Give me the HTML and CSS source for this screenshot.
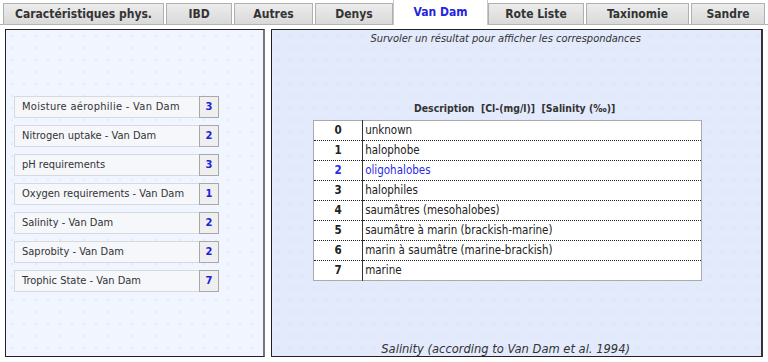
FILE: index.html
```html
<!DOCTYPE html>
<html>
<head>
<meta charset="utf-8">
<link rel="stylesheet" href="styles.css">
</head>
<body>
<div class="tabs">
  <div class="tab t1">Caractéristiques phys.</div>
  <div class="tab t2">IBD</div>
  <div class="tab t3">Autres</div>
  <div class="tab t4">Denys</div>
  <div class="tab t5 active">Van Dam</div>
  <div class="tab t6">Rote Liste</div>
  <div class="tab t7">Taxinomie</div>
  <div class="tab t8">Sandre</div>
</div>
<div class="content">
  <div class="panel left">
    <ul class="list">
      <li class="item"><span class="label wide">Moisture aérophilie - Van Dam</span><span class="count">3</span></li>
      <li class="item"><span class="label">Nitrogen uptake - Van Dam</span><span class="count">2</span></li>
      <li class="item"><span class="label">pH requirements</span><span class="count">3</span></li>
      <li class="item"><span class="label">Oxygen requirements - Van Dam</span><span class="count">1</span></li>
      <li class="item"><span class="label">Salinity - Van Dam</span><span class="count">2</span></li>
      <li class="item"><span class="label">Saprobity - Van Dam</span><span class="count">2</span></li>
      <li class="item"><span class="label">Trophic State - Van Dam</span><span class="count">7</span></li>
    </ul>
  </div>
  <div class="panel right">
    <div class="hint">Survoler un résultat pour afficher les correspondances</div>
    <div class="middle">
      <div class="desc">Description&nbsp; [Cl-(mg/l)]&nbsp; [Salinity (‰)]</div>
      <table class="grid">
        <tr><td class="num">0</td><td>unknown</td></tr>
        <tr><td class="num">1</td><td>halophobe</td></tr>
        <tr class="hl"><td class="num">2</td><td>oligohalobes</td></tr>
        <tr><td class="num">3</td><td>halophiles</td></tr>
        <tr><td class="num">4</td><td>saumâtres (mesohalobes)</td></tr>
        <tr><td class="num">5</td><td>saumâtre à marin (brackish-marine)</td></tr>
        <tr><td class="num">6</td><td>marin à saumâtre (marine-brackish)</td></tr>
        <tr><td class="num">7</td><td>marine</td></tr>
      </table>
    </div>
    <div class="caption">Salinity (according to Van Dam et al. 1994)</div>
  </div>
</div>
</body>
</html>
```
FILE: styles.css
```css
html, body {
  margin: 0;
  padding: 0;
  background: #ffffff;
  font-family: "DejaVu Sans Condensed", "DejaVu Sans", sans-serif;
  color: #333;
}
.tabs {
  display: flex;
  align-items: flex-end;
  height: 24px;
  padding-left: 3px;
  gap: 2px;
  border-bottom: 1px solid #b4b4b4;
  box-sizing: content-box;
}
.tab {
  height: 21px;
  box-sizing: border-box;
  border: 1px solid #b0b0b0;
  border-bottom: none;
  background: linear-gradient(#ececec, #d9d9d9);
  font-weight: bold;
  font-size: 12px;
  color: #333;
  text-align: center;
  line-height: 21px;
}
.t1 { width: 161px; }
.t2 { width: 66px; }
.t3 { width: 79px; }
.t4 { width: 78px; margin-right: -2px; }
.t5 { width: 95px; }
.t6 { width: 96px; margin-left: -2px; }
.t7 { width: 103px; }
.t8 { width: 74px; }
.tab.active {
  height: 25px;
  margin-bottom: -1px;
  background: #ffffff;
  color: #2424e0;
  line-height: 24px;
  position: relative;
  z-index: 1;
  border-color: #c8c8c8;
  border-top: none;
}
.content {
  display: flex;
  gap: 6px;
  padding: 4px 5px 0 5px;
  height: 328px;
}
.panel {
  box-sizing: border-box;
  border: 1px solid #222;
  border-right: 2px solid #777;
  background-image: radial-gradient(circle, rgba(180,195,225,0.35) 0.6px, transparent 0.9px);
  background-size: 12px 12px;
}
.left {
  width: 261px;
  background-color: #f0f5ff;
  display: flex;
  align-items: center;
  padding-left: 8px;
}
.list {
  list-style: none;
  margin: 0;
  padding: 0;
  display: flex;
  flex-direction: column;
  gap: 7px;
  margin-top: 1px;
}
.item {
  display: flex;
  height: 22px;
  font-size: 11px;
}
.label {
  width: 185px;
  box-sizing: border-box;
  border: 1px solid #d6d9de;
  border-right: none;
  background: #f5f7fb;
  padding-left: 7px;
  line-height: 20px;
  color: #333;
  white-space: nowrap;
}
.label.wide {
  letter-spacing: 0.3px;
}
.count {
  width: 20px;
  box-sizing: border-box;
  border: 1px solid #a8a8a8;
  background: #efefef;
  text-align: center;
  font-weight: bold;
  color: #2020d8;
  line-height: 20px;
}
.right {
  width: 493px;
  background-color: #e3eafc;
  border-right: 2px solid #333;
  display: flex;
  flex-direction: column;
  align-items: center;
  padding-right: 22px;
}
.hint {
  font-style: italic;
  font-size: 11px;
  color: #333;
  margin-top: 2px;
}
.middle {
  flex: 1;
  display: flex;
  flex-direction: column;
  justify-content: center;
  align-items: center;
  padding-bottom: 4px;
}
.desc {
  font-weight: bold;
  font-size: 10.4px;
  color: #333;
  margin-left: 18px;
  margin-bottom: 6px;
}
.grid {
  width: 389px;
  margin-left: 4px;
  border-collapse: collapse;
  background: #fff;
  border: 1px solid #aaa;
  font-size: 11.5px;
  color: #222;
}
.grid td {
  height: 19px;
  line-height: 18px;
  padding: 0 0 0 2px;
  border-bottom: 1px dotted #222;
}
.grid td.num {
  width: 48px;
  text-align: center;
  font-weight: bold;
  padding: 0;
  border-right: 1px solid #333;
}
.grid tr.hl td {
  color: #2a2ae6;
}
.caption {
  font-style: italic;
  font-size: 12.8px;
  color: #333;
}
```
